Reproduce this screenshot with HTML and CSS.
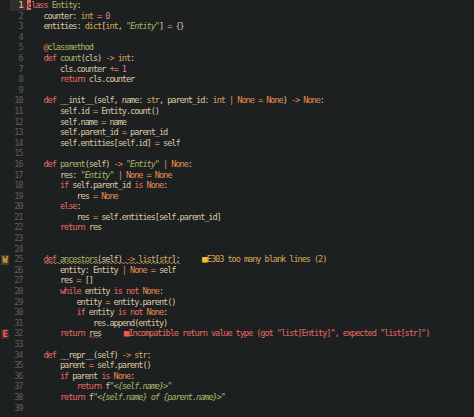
FILE: index.html
```html
<!DOCTYPE html>
<html>
<head>
<meta charset="utf-8">
<link rel="stylesheet" href="styles.css">
</head>
<body>
<div class="editor">
<div class="line cur"><span class="sign"></span><span class="num">1</span><span class="code"><span class="k"><span class="cursor">c</span>lass</span> <span class="f">Entity</span>:</span></div>
<div class="line"><span class="sign"></span><span class="num">2</span><span class="code">    counter: <span class="t">int</span> <span class="o">=</span> <span class="c">0</span></span></div>
<div class="line"><span class="sign"></span><span class="num">3</span><span class="code">    entities: <span class="t">dict</span>[<span class="t">int</span>, <span class="s">"Entity"</span>] <span class="o">=</span> {}</span></div>
<div class="line"><span class="sign"></span><span class="num">4</span><span class="code"></span></div>
<div class="line"><span class="sign"></span><span class="num">5</span><span class="code">    <span class="at">@</span><span class="d">classmethod</span></span></div>
<div class="line"><span class="sign"></span><span class="num">6</span><span class="code">    <span class="k">def</span> <span class="f">count</span>(cls) <span class="o">-&gt;</span> <span class="t">int</span>:</span></div>
<div class="line"><span class="sign"></span><span class="num">7</span><span class="code">        cls.counter <span class="o">+=</span> <span class="c">1</span></span></div>
<div class="line"><span class="sign"></span><span class="num">8</span><span class="code">        <span class="k">return</span> cls.counter</span></div>
<div class="line"><span class="sign"></span><span class="num">9</span><span class="code"></span></div>
<div class="line"><span class="sign"></span><span class="num">10</span><span class="code">    <span class="k">def</span> __init__(self, name: <span class="t">str</span>, parent_id: <span class="t">int</span> <span class="o">|</span> <span class="n">None</span> <span class="o">=</span> <span class="n">None</span>) <span class="o">-&gt;</span> <span class="n">None</span>:</span></div>
<div class="line"><span class="sign"></span><span class="num">11</span><span class="code">        self.id <span class="o">=</span> Entity.count()</span></div>
<div class="line"><span class="sign"></span><span class="num">12</span><span class="code">        self.name <span class="o">=</span> name</span></div>
<div class="line"><span class="sign"></span><span class="num">13</span><span class="code">        self.parent_id <span class="o">=</span> parent_id</span></div>
<div class="line"><span class="sign"></span><span class="num">14</span><span class="code">        self.entities[self.id] <span class="o">=</span> self</span></div>
<div class="line"><span class="sign"></span><span class="num">15</span><span class="code"></span></div>
<div class="line"><span class="sign"></span><span class="num">16</span><span class="code">    <span class="k">def</span> <span class="f">parent</span>(self) <span class="o">-&gt;</span> <span class="s">"Entity"</span> <span class="o">|</span> <span class="n">None</span>:</span></div>
<div class="line"><span class="sign"></span><span class="num">17</span><span class="code">        res: <span class="s">"Entity"</span> <span class="o">|</span> <span class="n">None</span> <span class="o">=</span> <span class="n">None</span></span></div>
<div class="line"><span class="sign"></span><span class="num">18</span><span class="code">        <span class="k">if</span> self.parent_id <span class="k">is</span> <span class="n">None</span>:</span></div>
<div class="line"><span class="sign"></span><span class="num">19</span><span class="code">            res <span class="o">=</span> <span class="n">None</span></span></div>
<div class="line"><span class="sign"></span><span class="num">20</span><span class="code">        <span class="k">else</span>:</span></div>
<div class="line"><span class="sign"></span><span class="num">21</span><span class="code">            res <span class="o">=</span> self.entities[self.parent_id]</span></div>
<div class="line"><span class="sign"></span><span class="num">22</span><span class="code">        <span class="k">return</span> res</span></div>
<div class="line"><span class="sign"></span><span class="num">23</span><span class="code"></span></div>
<div class="line"><span class="sign"></span><span class="num">24</span><span class="code"></span></div>
<div class="line"><span class="sign"><span class="sw">W</span></span><span class="num">25</span><span class="code">    <span class="uw"><span class="k">def</span> <span class="f">ancestors</span>(self) <span class="o">-&gt;</span> <span class="t">list</span>[<span class="t">str</span>]:</span><span class="vt warn"><span class="sq">■</span>E303 too many blank lines (2)</span></span></div>
<div class="line"><span class="sign"></span><span class="num">26</span><span class="code">        entity: Entity <span class="o">|</span> <span class="n">None</span> <span class="o">=</span> self</span></div>
<div class="line"><span class="sign"></span><span class="num">27</span><span class="code">        res <span class="o">=</span> []</span></div>
<div class="line"><span class="sign"></span><span class="num">28</span><span class="code">        <span class="k">while</span> entity <span class="k">is</span> <span class="k">not</span> <span class="n">None</span>:</span></div>
<div class="line"><span class="sign"></span><span class="num">29</span><span class="code">            entity <span class="o">=</span> entity.parent()</span></div>
<div class="line"><span class="sign"></span><span class="num">30</span><span class="code">            <span class="k">if</span> entity <span class="k">is</span> <span class="k">not</span> <span class="n">None</span>:</span></div>
<div class="line"><span class="sign"></span><span class="num">31</span><span class="code">                res.append(entity)</span></div>
<div class="line"><span class="sign"><span class="se">E</span></span><span class="num">32</span><span class="code">        <span class="k">return</span> <span class="ue">res</span><span class="vt err"><span class="sq">■</span>Incompatible return value type (got "list[Entity]", expected "list[str]")</span></span></div>
<div class="line"><span class="sign"></span><span class="num">33</span><span class="code"></span></div>
<div class="line"><span class="sign"></span><span class="num">34</span><span class="code">    <span class="k">def</span> __repr__(self) <span class="o">-&gt;</span> <span class="t">str</span>:</span></div>
<div class="line"><span class="sign"></span><span class="num">35</span><span class="code">        parent <span class="o">=</span> self.parent()</span></div>
<div class="line"><span class="sign"></span><span class="num">36</span><span class="code">        <span class="k">if</span> parent <span class="k">is</span> <span class="n">None</span>:</span></div>
<div class="line"><span class="sign"></span><span class="num">37</span><span class="code">            <span class="k">return</span> f<span class="s">"&lt;{self.name}&gt;"</span></span></div>
<div class="line"><span class="sign"></span><span class="num">38</span><span class="code">        <span class="k">return</span> f<span class="s">"&lt;{self.name} of {parent.name}&gt;"</span></span></div>
<div class="line"><span class="sign"></span><span class="num">39</span><span class="code"></span></div>
</div>
</body>
</html>
```

FILE: styles.css
```css
html, body {
  margin: 0;
  padding: 0;
  background: #1d2021;
}
.editor {
  width: 474px;
  height: 417px;
  background: #1d2021;
  color: #ddc7a1;
  font-family: "DejaVu Sans Mono", "Liberation Mono", monospace;
  font-size: 8.6px;
  letter-spacing: -1.052px;
  overflow: hidden;
}
.line {
  display: flex;
  height: 10.6px;
  line-height: 10.6px;
  white-space: pre;
}
.sign {
  width: 10px;
  flex: none;
  display: flex;
  align-items: center;
  justify-content: center;
}
.num {
  width: 16.5px;
  flex: none;
  box-sizing: border-box;
  padding-right: 4px;
  text-align: right;
  color: #665c54;
}
.cur .num {
  background: #32302f;
  color: #d8a657;
  font-weight: bold;
}
.code {
  padding-left: 0.5px;
}
.cursor {
  background: #ea6962;
  color: #1d2021;
}
.k { color: #ea6962; }
.f { color: #a9b665; }
.t { color: #d8a657; }
.n { color: #e78a4e; }
.o { color: #e78a4e; }
.c { color: #d3869b; }
.s { color: #a9b665; font-style: italic; }
.at { color: #e78a4e; }
.d { color: #a9b665; }
.sw, .se {
  display: block;
  width: 8px;
  height: 10px;
  line-height: 10px;
  text-align: center;
  font-weight: bold;
  letter-spacing: 0;
}
.sw {
  background: #4a3f22;
  color: #d8a657;
}
.se {
  background: #4d2a28;
  color: #ea6962;
}
.uw, .ue {
  background-repeat: repeat-x;
  background-position: left bottom;
  background-size: 4px 2px;
}
.uw {
  background-image: url("data:image/svg+xml,%3Csvg xmlns='http://www.w3.org/2000/svg' width='4' height='2'%3E%3Cpolyline points='0,1.6 1,0.4 2,0.4 3,1.6 4,1.6' fill='none' stroke='%23d8a657' stroke-width='0.8'/%3E%3C/svg%3E");
}
.ue {
  background-image: url("data:image/svg+xml,%3Csvg xmlns='http://www.w3.org/2000/svg' width='4' height='2'%3E%3Cpolyline points='0,1.6 1,0.4 2,0.4 3,1.6 4,1.6' fill='none' stroke='%23ea6962' stroke-width='0.8'/%3E%3C/svg%3E");
}
.vt {
  margin-left: 22.5px;
}
.warn { color: #d8a657; }
.err { color: #ea6962; }
.sq { letter-spacing: -1px; font-size: 9.5px; }
.warn .sq { color: #fabd2f; }
.err .sq { color: #f2594b; }
```
